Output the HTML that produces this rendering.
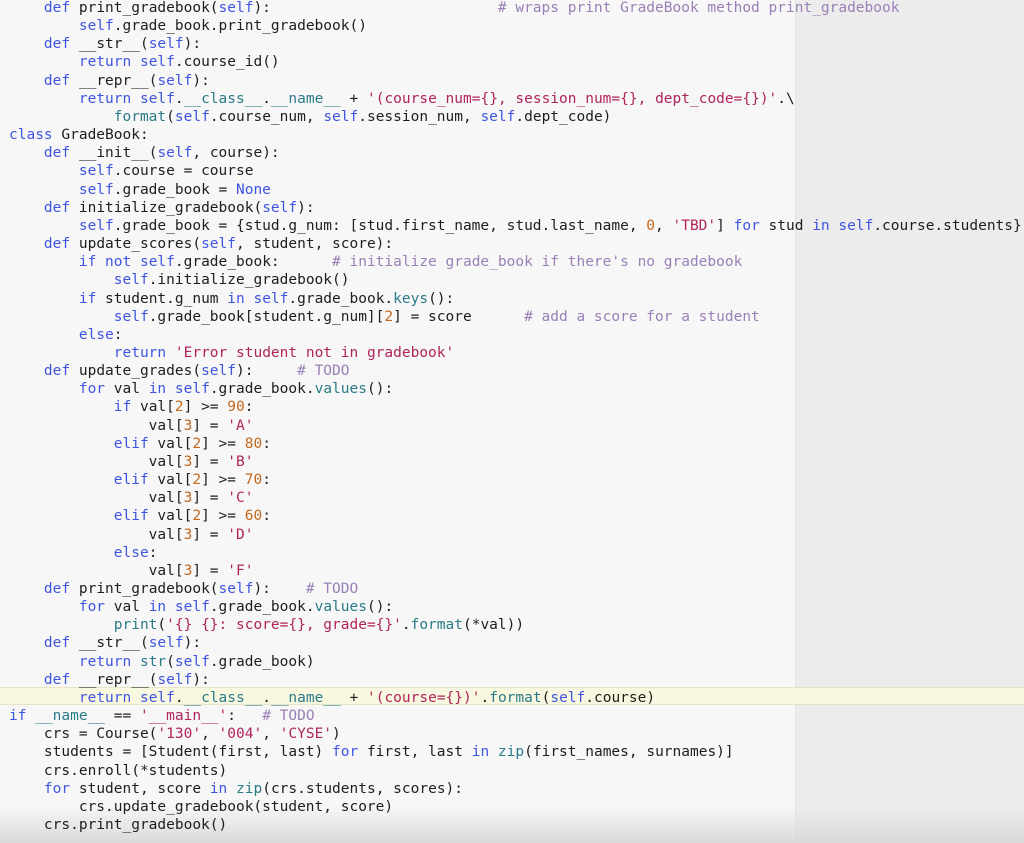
<!DOCTYPE html>
<html><head><meta charset="utf-8"><style>
html,body{margin:0;padding:0;width:1024px;height:843px;overflow:hidden;background:#f7f7f7}
.rp{position:absolute;left:795px;top:0;width:229px;height:843px;background:#ececec;border-left:1px solid #e4e4e4}
.bot{position:absolute;left:0;top:805px;width:1024px;height:38px;background:linear-gradient(rgba(220,220,220,0),rgba(215,215,215,0.9))}
.hl{position:absolute;left:0;top:687px;width:1024px;height:16px;background:#f8f7df;border-top:1px solid #e6e4c4;border-bottom:1px solid #e6e4c4}
pre{position:absolute;left:9px;top:-1px;margin:0;font-family:"DejaVu Sans Mono","Liberation Mono",monospace;font-size:14.5px;line-height:18.15px;color:#1e1e1e}
.k{color:#3f55e0}.s{color:#b0245c}.n{color:#c2691e}.c{color:#9a80b6}.t{color:#2a7b88}
</style></head><body>
<div class="rp"></div><div class="hl"></div><div class="bot"></div>
<pre>    <span class="k">def</span> print_gradebook(<span class="k">self</span>):                          <span class="c"># wraps print GradeBook method print_gradebook</span>
        <span class="k">self</span>.grade_book.print_gradebook()
    <span class="k">def</span> __str__(<span class="k">self</span>):
        <span class="k">return</span> <span class="k">self</span>.course_id()
    <span class="k">def</span> __repr__(<span class="k">self</span>):
        <span class="k">return</span> <span class="k">self</span>.<span class="t">__class__</span>.<span class="t">__name__</span> + <span class="s">'(course_num={}, session_num={}, dept_code={})'</span>.\
            <span class="t">format</span>(<span class="k">self</span>.course_num, <span class="k">self</span>.session_num, <span class="k">self</span>.dept_code)
<span class="k">class</span> GradeBook:
    <span class="k">def</span> __init__(<span class="k">self</span>, course):
        <span class="k">self</span>.course = course
        <span class="k">self</span>.grade_book = <span class="k">None</span>
    <span class="k">def</span> initialize_gradebook(<span class="k">self</span>):
        <span class="k">self</span>.grade_book = {stud.g_num: [stud.first_name, stud.last_name, <span class="n">0</span>, <span class="s">'TBD'</span>] <span class="k">for</span> stud <span class="k">in</span> <span class="k">self</span>.course.students}
    <span class="k">def</span> update_scores(<span class="k">self</span>, student, score):
        <span class="k">if not</span> <span class="k">self</span>.grade_book:      <span class="c"># initialize grade_book if there's no gradebook</span>
            <span class="k">self</span>.initialize_gradebook()
        <span class="k">if</span> student.g_num <span class="k">in</span> <span class="k">self</span>.grade_book.<span class="t">keys</span>():
            <span class="k">self</span>.grade_book[student.g_num][<span class="n">2</span>] = score      <span class="c"># add a score for a student</span>
        <span class="k">else</span>:
            <span class="k">return</span> <span class="s">'Error student not in gradebook'</span>
    <span class="k">def</span> update_grades(<span class="k">self</span>):     <span class="c"># TODO</span>
        <span class="k">for</span> val <span class="k">in</span> <span class="k">self</span>.grade_book.<span class="t">values</span>():
            <span class="k">if</span> val[<span class="n">2</span>] &gt;= <span class="n">90</span>:
                val[<span class="n">3</span>] = <span class="s">'A'</span>
            <span class="k">elif</span> val[<span class="n">2</span>] &gt;= <span class="n">80</span>:
                val[<span class="n">3</span>] = <span class="s">'B'</span>
            <span class="k">elif</span> val[<span class="n">2</span>] &gt;= <span class="n">70</span>:
                val[<span class="n">3</span>] = <span class="s">'C'</span>
            <span class="k">elif</span> val[<span class="n">2</span>] &gt;= <span class="n">60</span>:
                val[<span class="n">3</span>] = <span class="s">'D'</span>
            <span class="k">else</span>:
                val[<span class="n">3</span>] = <span class="s">'F'</span>
    <span class="k">def</span> print_gradebook(<span class="k">self</span>):    <span class="c"># TODO</span>
        <span class="k">for</span> val <span class="k">in</span> <span class="k">self</span>.grade_book.<span class="t">values</span>():
            <span class="t">print</span>(<span class="s">'{} {}: score={}, grade={}'</span>.<span class="t">format</span>(*val))
    <span class="k">def</span> __str__(<span class="k">self</span>):
        <span class="k">return</span> <span class="t">str</span>(<span class="k">self</span>.grade_book)
    <span class="k">def</span> __repr__(<span class="k">self</span>):
        <span class="k">return</span> <span class="k">self</span>.<span class="t">__class__</span>.<span class="t">__name__</span> + <span class="s">'(course={})'</span>.<span class="t">format</span>(<span class="k">self</span>.course)
<span class="k">if</span> <span class="t">__name__</span> == <span class="s">'__main__'</span>:   <span class="c"># TODO</span>
    crs = Course(<span class="s">'130'</span>, <span class="s">'004'</span>, <span class="s">'CYSE'</span>)
    students = [Student(first, last) <span class="k">for</span> first, last <span class="k">in</span> <span class="t">zip</span>(first_names, surnames)]
    crs.enroll(*students)
    <span class="k">for</span> student, score <span class="k">in</span> <span class="t">zip</span>(crs.students, scores):
        crs.update_gradebook(student, score)
    crs.print_gradebook()</pre>
</body></html>
